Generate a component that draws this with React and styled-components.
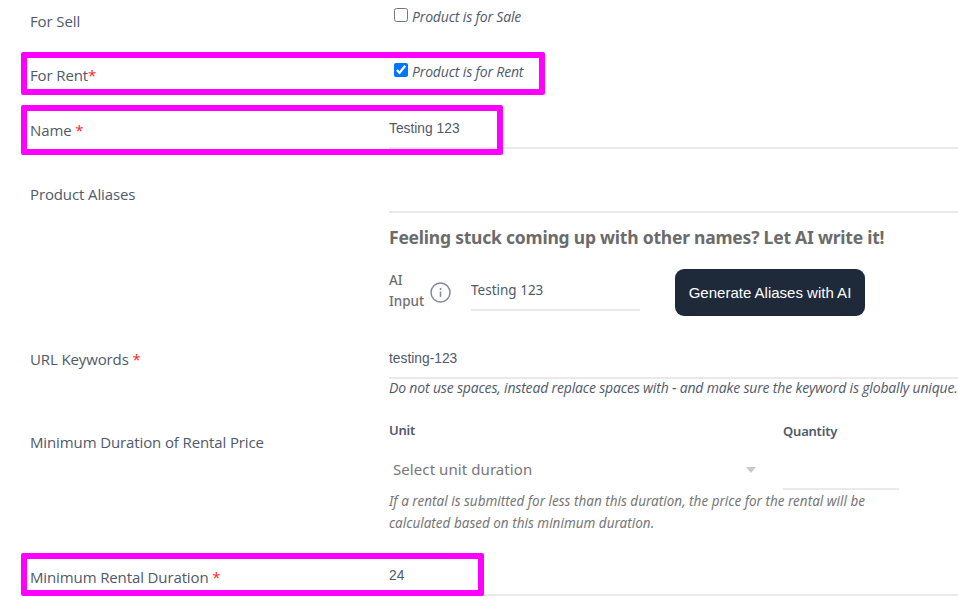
import React, { useState } from "react";
import styled, { createGlobalStyle } from "styled-components";

const GlobalStyle = createGlobalStyle`
  * {
    box-sizing: border-box;
  }
  body {
    margin: 0;
    background-color: white;
    overflow: hidden;
  }
`;

const Form = styled.form`
  width: 958px;
  height: 612px;
  overflow: hidden;
  color: #4f596b;
  font-family: "Noto Sans", sans-serif;
  font-size: 15px;
`;

const Row = styled.div`
  position: relative;
  display: grid;
  grid-template-columns: 359px 1fr;
  align-items: start;
  height: ${({ $height }) => $height}px;
  padding-left: 30px;
`;

const Label = styled.label`
  padding-top: ${({ $top }) => $top}px;
  font-family: "Open Sans", sans-serif;
  font-size: 15px;
  line-height: 20px;
  letter-spacing: -0.12px;
  white-space: nowrap;
  .required {
    color: #ff1f1f;
  }
`;

const Field = styled.div`
  display: flex;
  flex-direction: column;
  min-width: 0;
`;

const Highlight = styled.div`
  position: absolute;
  z-index: 1;
  left: 21px;
  top: ${({ $top }) => $top}px;
  width: ${({ $width }) => $width}px;
  height: ${({ $height }) => $height}px;
  border: 6px solid #ff00ff;
  border-radius: 2px;
  pointer-events: none;
`;

const CheckLine = styled.label`
  display: flex;
  align-items: center;
  gap: 4px;
  height: 20px;
  margin-top: ${({ $top }) => $top}px;
  padding-left: 5px;
  font-family: "Open Sans", sans-serif;
  font-size: 14px;
  font-style: italic;
  letter-spacing: -0.16px;
  input {
    width: 14px;
    height: 14px;
    margin: 0 0 3px;
  }
`;

const TextInput = styled.input`
  display: block;
  width: 100%;
  height: ${({ $height }) => $height}px;
  padding: ${({ $top }) => $top ?? 0}px 0 0;
  border: none;
  border-bottom: 2px solid #e9e9e9;
  border-radius: 0;
  outline: none;
  background-color: transparent;
  color: #4f596b;
  font-family: "Liberation Sans", Arial, sans-serif;
  font-size: 13.8px;
`;

const Hint = styled.p`
  margin: 0;
  font-family: "Open Sans", sans-serif;
  font-size: 14px;
  font-style: italic;
  line-height: 18px;
  letter-spacing: -0.17px;
  white-space: nowrap;
`;

const Heading = styled.h3`
  margin: 12px 0 0;
  color: #6b6b6b;
  font-size: 17.5px;
  font-weight: 700;
  line-height: 24px;
  letter-spacing: -0.22px;
  white-space: nowrap;
`;

const AiBar = styled.div`
  display: flex;
  margin-top: 21px;
`;

const AiLabel = styled.div`
  width: 41px;
  color: #6f6f6f;
  font-size: 13.5px;
  font-weight: 500;
  line-height: 21px;
`;

const InfoIcon = styled.svg`
  width: 22px;
  height: 22px;
  margin-top: 12px;
`;

const AiInput = styled(TextInput)`
  width: 169px;
  margin: 0 35px 0 19px;
  font-family: "Noto Sans", sans-serif;
  font-size: 13.5px;
`;

const Button = styled.button`
  width: 190px;
  height: 47px;
  margin-top: -1px;
  padding: 0;
  border: none;
  border-radius: 9px;
  background-color: #1e293a;
  color: white;
  font-family: "Liberation Sans", Arial, sans-serif;
  font-size: 15px;
  white-space: nowrap;
`;

const Duration = styled.div`
  display: grid;
  grid-template-columns: 394px 116px;
`;

const ColumnTitle = styled.div`
  padding-top: ${({ $top }) => $top}px;
  font-size: 13px;
  font-weight: 600;
  line-height: 20px;
  letter-spacing: -0.2px;
`;

const Select = styled.div`
  display: flex;
  align-items: center;
  justify-content: space-between;
  width: 367px;
  height: 30px;
  margin-top: 14px;
  padding-left: 4px;
  color: #777;
  font-size: 15px;
  letter-spacing: 0.08px;
`;

const Caret = styled.span`
  margin-top: 1px;
  border: 5px solid transparent;
  border-top: 6px solid #c9c9c9;
  border-bottom: none;
`;

const DurationHint = styled.p`
  margin: 0;
  color: #777;
  font-size: 13.5px;
  font-style: italic;
  line-height: 22px;
  white-space: nowrap;
`;

function RequiredMark() {
  return <span className="required">*</span>;
}

function App() {
  const [forSale, setForSale] = useState(false);
  const [forRent, setForRent] = useState(true);

  return (
    <>
      <GlobalStyle />
      <Form>
        <Row $height={50}>
          <Label $top={11}>For Sell</Label>
          <CheckLine $top={6}>
            <input type="checkbox" checked={forSale} onChange={() => setForSale(!forSale)} />
            Product is for Sale
          </CheckLine>
        </Row>

        <Row $height={48}>
          <Label $top={15}>
            For Rent
            <RequiredMark />
          </Label>
          <CheckLine $top={11}>
            <input type="checkbox" checked={forRent} onChange={() => setForRent(!forRent)} />
            Product is for Rent
          </CheckLine>
          <Highlight $top={2} $width={524} $height={43} />
        </Row>

        <Row $height={60}>
          <Label $top={22}>
            Name <RequiredMark />
          </Label>
          <TextInput $height={51} $top={11} defaultValue="Testing 123" />
          <Highlight $top={7} $width={482} $height={50} />
        </Row>

        <Row $height={180}>
          <Label $top={26}>Product Aliases</Label>
          <Field>
            <TextInput $height={55} />
            <Heading>Feeling stuck coming up with other names? Let AI write it!</Heading>
            <AiBar>
              <AiLabel>
                AI
                <br />
                Input
              </AiLabel>
              <InfoIcon viewBox="0 0 22 22" fill="none" stroke="#8189a0" strokeWidth="1.5">
                <circle cx="10.5" cy="10.5" r="9.5" />
                <path d="M10.5 9.5v5.5M10.5 6v2" />
              </InfoIcon>
              <AiInput $height={41} $top={1} defaultValue="Testing 123" />
              <Button type="button">Generate Aliases with AI</Button>
            </AiBar>
          </Field>
        </Row>

        <Row $height={66}>
          <Label $top={11}>
            URL Keywords <RequiredMark />
          </Label>
          <Field>
            <TextInput $height={41} $top={1} defaultValue="testing-123" />
            <Hint>
              Do not use spaces, instead replace spaces with - and make sure the keyword is globally
              unique.
            </Hint>
          </Field>
        </Row>

        <Row $height={148}>
          <Label $top={28}>Minimum Duration of Rental Price</Label>
          <Field>
            <Duration>
              <div>
                <ColumnTitle $top={16}>Unit</ColumnTitle>
                <Select>
                  Select unit duration
                  <Caret />
                </Select>
              </div>
              <div>
                <ColumnTitle $top={17}>Quantity</ColumnTitle>
                <TextInput $height={49} />
              </div>
            </Duration>
            <DurationHint>
              If a rental is submitted for less than this duration, the price for the rental will be
              <br />
              calculated based on this minimum duration.
            </DurationHint>
          </Field>
        </Row>

        <Row $height={60}>
          <Label $top={15}>
            Minimum Rental Duration <RequiredMark />
          </Label>
          <TextInput $height={44} $top={4} defaultValue="24" />
          <Highlight $top={1} $width={463} $height={43} />
        </Row>
      </Form>
    </>
  );
}

export default App;
